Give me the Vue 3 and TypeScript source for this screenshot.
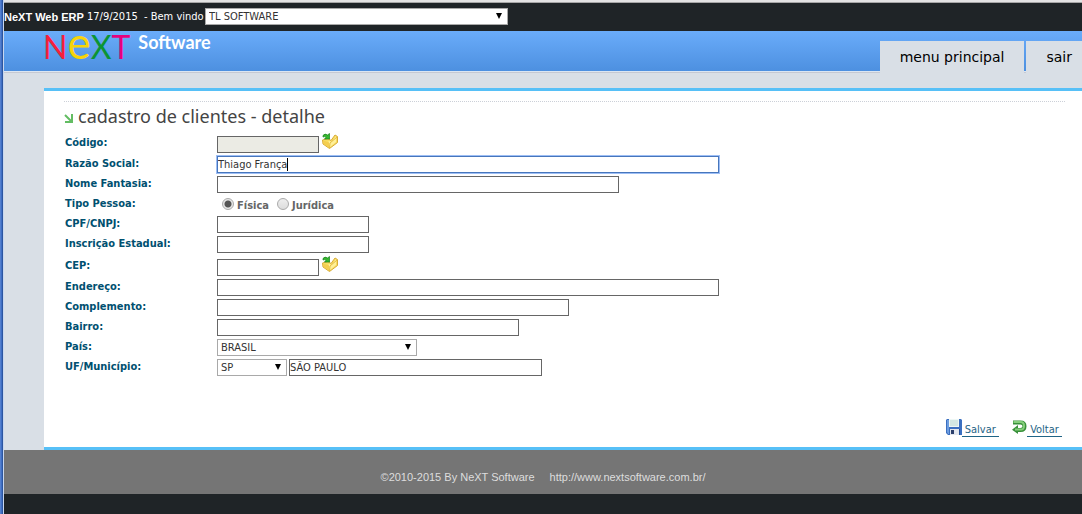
<script setup lang="ts">
import { ref } from 'vue'

interface TextField {
  id: string
  label: string
  size: 'xs' | 'sm' | 'md' | 'lg' | 'ml' | 'xl'
  lookup?: boolean
  readonly?: boolean
  active?: boolean
  kind?: 'text' | 'pessoa' | 'pais' | 'municipio'
}

const fields: TextField[] = [
  { id: 'codigo', label: 'Código:', size: 'xs', lookup: true, readonly: true },
  { id: 'razao', label: 'Razão Social:', size: 'xl', active: true },
  { id: 'fantasia', label: 'Nome Fantasia:', size: 'lg' },
  { id: 'fisica', label: 'Tipo Pessoa:', size: 'xs', kind: 'pessoa' },
  { id: 'cpf', label: 'CPF/CNPJ:', size: 'sm' },
  { id: 'inscricao', label: 'Inscrição Estadual:', size: 'sm' },
  { id: 'cep', label: 'CEP:', size: 'xs', lookup: true },
  { id: 'endereco', label: 'Endereço:', size: 'xl' },
  { id: 'complemento', label: 'Complemento:', size: 'ml' },
  { id: 'bairro', label: 'Bairro:', size: 'md' },
  { id: 'pais', label: 'País:', size: 'sm', kind: 'pais' },
  { id: 'uf', label: 'UF/Município:', size: 'sm', kind: 'municipio' },
]

const values = ref<Record<string, string>>({ razao: 'Thiago França' })
const empresa = ref('TL SOFTWARE')
const pessoa = ref('F')
const pais = ref('BRASIL')
const uf = ref('SP')
const municipio = ref('SÃO PAULO')
</script>

<template>
  <div class="page">
    <div class="topbar">
      <strong>NeXT Web ERP</strong>
      <span class="date">17/9/2015&nbsp; - Bem vindo</span>
      <span class="select company">
        <select v-model="empresa" aria-label="Empresa"><option>TL SOFTWARE</option></select>
      </span>
    </div>

    <header class="header">
      <div class="brand">
        <span class="logo"><span class="n">N</span><span class="e">e</span><span class="x">X</span><span class="t">T</span></span>
        <span class="software">Software</span>
      </div>
      <nav class="tabs">
        <a href="#menu">menu principal</a>
        <a href="#sair">sair</a>
      </nav>
    </header>

    <main class="panel">
      <div class="dotted"></div>
      <h1>
        <svg width="9" height="9" viewBox="0 0 9 9" aria-hidden="true"><path d="M1 1 7 7M8 0V8H1" fill="none" stroke="#63bd63" stroke-width="2" /></svg>
        cadastro de clientes - detalhe
      </h1>

      <form @submit.prevent>
        <div v-for="f in fields" :key="f.id" class="row" :class="{ tall: f.lookup }">
          <label class="caption" :for="f.id">{{ f.label }}</label>

          <div v-if="f.kind === 'pessoa'" class="control radios">
            <input id="fisica" v-model="pessoa" type="radio" name="pessoa" value="F" />
            <label for="fisica">Física</label>
            <input id="juridica" v-model="pessoa" type="radio" name="pessoa" value="J" />
            <label for="juridica">Jurídica</label>
          </div>

          <div v-else-if="f.kind === 'pais'" class="control">
            <span class="select country"><select id="pais" v-model="pais"><option>BRASIL</option></select></span>
          </div>

          <div v-else-if="f.kind === 'municipio'" class="control">
            <span class="select state"><select id="uf" v-model="uf"><option>SP</option></select></span>
            <input v-model="municipio" class="text city" type="text" aria-label="Município" />
          </div>

          <div v-else class="control">
            <span class="field" :class="f.size">
              <input :id="f.id" v-model="values[f.id]" class="text" :class="{ active: f.active }" type="text" :readonly="f.readonly" />
              <span v-if="f.active" class="caret"><span class="ghost">{{ values[f.id] }}</span></span>
            </span>
            <button v-if="f.lookup" class="lookup" type="button" :aria-label="'Pesquisar ' + f.label">
              <svg width="16" height="16" viewBox="0 0 16 16" aria-hidden="true">
                <path d="M0.500 7 6 5.500 9 7.500 13 2 15.500 3.500V9.500L7.500 15.500 1 11Z" fill="#f7dc62" stroke="#d8ac37" />
                <path d="M6.500 8 10 8.500 14 3V9L7.500 14.500Z" fill="#fff09a" />
                <path d="M1 7.500 7 9.500V14.500L1.500 10.500Z" fill="#f4ce50" />
                <path d="M7.500 15 8 10 15 4" fill="none" stroke="#e5bd43" />
                <path d="M1 2.500Q3 0 5.500 2L7.500 0.500V6H2.500L4 4.500Q3 3 1 4Z" fill="#35b82e" stroke="#16801b" stroke-width=".7" />
              </svg>
            </button>
          </div>
        </div>
      </form>

      <div class="actions">
        <a href="#salvar">
          <svg width="16" height="16" viewBox="0 0 16 16" aria-hidden="true">
            <path d="M1 0H15L16 1V16H2L0 14V1Z" fill="#3b6fc0" />
            <path d="M1 1H3V15H2L1 13Z" fill="#6d9de0" />
            <path d="M3 0H13V8H3Z" fill="#eef7f5" />
            <path d="M4 2H12M4 4H12M4 6H12" stroke="#b9d8d1" />
            <path d="M4 10H13V16H4Z" fill="#e3e7ee" />
            <path d="M5 11H8V15H5Z" fill="#2b3f6b" />
            <path d="M13 10H14V16H13Z" fill="#254f99" />
          </svg><span>&nbsp;Salvar&nbsp;</span>
        </a>
        <a href="#voltar">
          <svg width="15" height="16" viewBox="0 0 15 16" aria-hidden="true">
            <path d="M1 3.500H8.500Q12.500 3.500 12.500 7.200T8.500 11H5" fill="none" stroke="#38903a" stroke-width="4" />
            <path d="M6 6V15L0 10.800Z" fill="#38903a" />
            <path d="M1.500 3H8.500Q12 3 12 7T8.500 10.500H3" fill="none" stroke="#85cf7b" stroke-width="2" />
          </svg><span>&nbsp;Voltar&nbsp;</span>
        </a>
      </div>
    </main>

    <footer class="footer">
      <span>©2010-2015 By NeXT Software</span>
      <a href="#site">http://www.nextsoftware.com.br/</a>
    </footer>
  </div>
</template>

<style>
body {
  background: #1f2427;
}
</style>

<style scoped>
* {
  box-sizing: border-box;
}
.page {
  min-height: 100vh;
  border-left: 4px solid #315ba8;
  border-image: linear-gradient(to right, #5580ce 0 1px, #3f6fc4 1px 2px, #2d56a0 2px 3px, #c8d7ef 3px 4px) 0 0 0 4;
  background: #1f2427;
  font: 11px/14px "DejaVu Sans Condensed", "DejaVu Sans", sans-serif;
}
a {
  color: inherit;
  text-decoration: none;
}
.topbar {
  display: flex;
  align-items: center;
  height: 31px;
  padding-bottom: 1px;
  border-top: 3px solid #e0e0e0;
  border-image: linear-gradient(#e3e3e3 0 2px, #a6a6a6 2px 3px) 3 0 0 0;
  color: #fff;
  white-space: nowrap;
}
.topbar strong {
  font: bold 11px/14px "Liberation Sans", sans-serif;
  width: 83px;
}
.date {
  width: 118px;
}
.select {
  position: relative;
  display: block;
  height: 17px;
}
.select::after {
  content: "";
  position: absolute;
  right: 6px;
  top: 5px;
  border: 3px solid transparent;
  border-top: 6px solid #000;
  border-bottom: 0;
  pointer-events: none;
}
select {
  appearance: none;
  display: block;
  width: 100%;
  height: 100%;
  margin: 0;
  padding: 0 3px;
  border: 1px solid #a9a9a9;
  border-radius: 0;
  background: #fff;
  color: #333;
  font: inherit;
}
.company {
  width: 303px;
}
.country {
  width: 200px;
}
.state {
  width: 70px;
  margin-right: 2px;
}
.header {
  display: flex;
  justify-content: space-between;
  height: 40px;
  background: linear-gradient(#6aacfa, #4d90e0);
}
.brand {
  display: flex;
  overflow: hidden;
  padding-left: 39px;
}
.logo {
  display: flex;
  align-items: baseline;
  height: 40px;
  margin-top: -14px;
  font: 32px/50px Lato, sans-serif;
}
.n {
  color: #f5203b;
}
.e {
  color: #f8d40a;
  font-size: 44px;
}
.x {
  color: #0b9434;
}
.t {
  color: #e6007e;
}
.software {
  margin-left: 8px;
  color: #fff;
  font: bold 18px/22px Lato, sans-serif;
}
.tabs {
  display: flex;
  gap: 2px;
  padding-top: 10px;
  z-index: 1;
}
.tabs a {
  height: 36px;
  padding: 0 20px;
  background: #d9dfe6;
  color: #000;
  font: 14px/32px "DejaVu Sans", sans-serif;
}
.tabs a:last-child {
  padding-right: 10px;
}
.panel {
  position: relative;
  border-left: 40px solid #d9dfe6;
  background: #fff;
}
.panel::before {
  content: "";
  display: block;
  height: 20px;
  margin-left: -40px;
  background: linear-gradient(#dce6f2 0 1px, #c6c9d2 1px 2px, #d9dfe6 2px 17px, transparent 17px);
}
.panel::before {
  height: 17px;
}
.panel::after {
  content: "";
  display: block;
  height: 3px;
  background: #57c0f7;
}
.dotted {
  height: 13px;
  padding: 0 17px 0 20px;
  border-top: 3px solid #57c0f7;
}
.dotted::after {
  content: "";
  display: block;
  margin-top: 10px;
  border-top: 1px dotted #ccd0d8;
}
h1 {
  display: flex;
  align-items: center;
  gap: 5px;
  height: 30px;
  margin: 0;
  padding-left: 20px;
  color: #444;
  font: 18px/28px "Noto Sans", sans-serif;
}
h1 svg {
  margin-top: 4px;
}
form {
  padding-left: 21px;
}
.row {
  display: flex;
  align-items: center;
  height: 20px;
}
.row.tall {
  height: 23px;
}
.caption {
  width: 152px;
  color: #005070;
  font-weight: bold;
}
.control {
  display: flex;
  align-items: flex-end;
  align-self: stretch;
  padding-bottom: 1px;
}
.field {
  position: relative;
}
.xs {
  width: 102px;
}
.sm {
  width: 152px;
}
.md {
  width: 302px;
}
.ml {
  width: 352px;
}
.lg {
  width: 402px;
}
.xl {
  width: 502px;
}
.text {
  display: block;
  width: 100%;
  height: 17px;
  margin: 0;
  padding: 0;
  border: 1px solid #666;
  border-radius: 0;
  background: #fff;
  color: #333;
  font: inherit;
  outline: 0;
}
.text.active {
  border-color: #4776bc;
  box-shadow: 0 0 0 1px #9dbef5;
}
.text:read-only {
  background: #ebebe4;
}
.city {
  width: 253px;
}
.caret {
  position: absolute;
  left: 1px;
  top: 2px;
  height: 13px;
  border-right: 1px solid #000;
  pointer-events: none;
}
.ghost {
  visibility: hidden;
}
.lookup {
  align-self: flex-start;
  margin: 2px 0 0 3px;
  padding: 0;
  border: 0;
  background: none;
}
.lookup svg {
  display: block;
}
.radios {
  align-items: center;
  padding: 0 0 0 5px;
  color: #666;
  font-weight: bold;
}
.radios label {
  margin: 4px 8px 0 3px;
}
input[type="radio"] {
  appearance: none;
  width: 12px;
  height: 12px;
  margin: 0;
  border: 1px solid #aaa;
  border-radius: 50%;
  background: linear-gradient(#eee, #ddd);
}
input[type="radio"]:checked {
  background: radial-gradient(circle, #555 0 3px, #e6e6e6 4px);
}
.actions {
  display: flex;
  justify-content: flex-end;
  gap: 13px;
  padding: 42px 20px 10px 0;
  color: #1f6486;
}
.actions a {
  display: flex;
  align-items: flex-start;
}
.actions span {
  height: 14px;
  margin-top: 4px;
  border-bottom: 1px solid #1f6486;
}
.footer {
  display: flex;
  justify-content: center;
  gap: 15px;
  height: 44px;
  padding-top: 20px;
  background: #757575;
  color: #ddd;
  font: 11px/14px "Liberation Sans", sans-serif;
}
</style>
